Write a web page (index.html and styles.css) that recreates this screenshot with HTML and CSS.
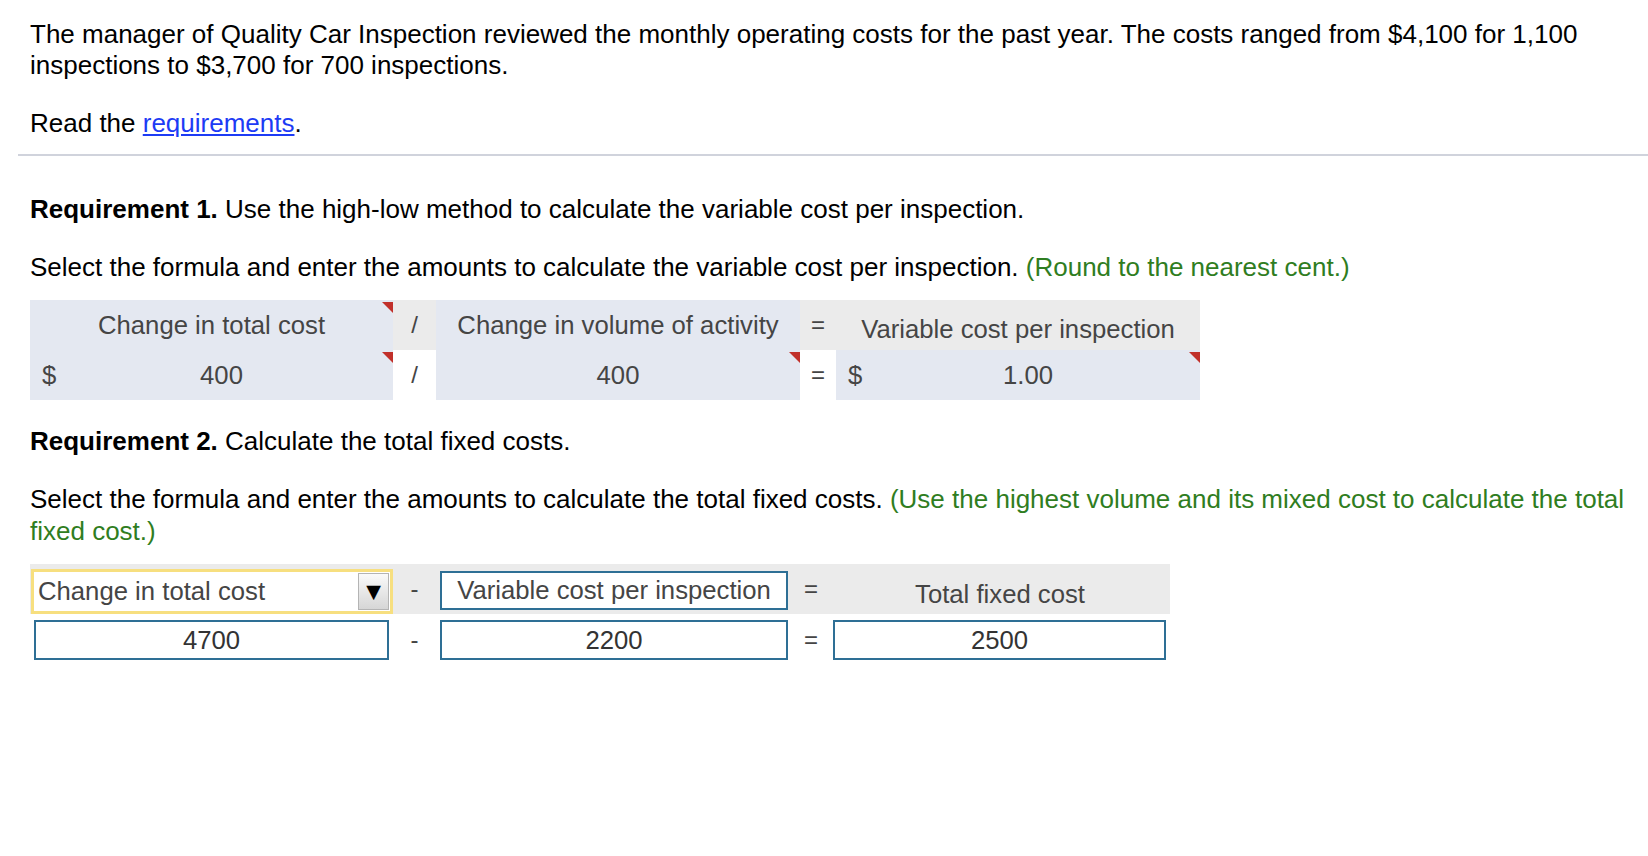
FILE: index.html
```html
<!DOCTYPE html>
<html>
<head>
<meta charset="utf-8">
<title>High-low method</title>
<link rel="stylesheet" href="styles.css">
</head>
<body>
<div class="page">
  <div class="block">
    <p class="intro">The manager of Quality Car Inspection reviewed the monthly operating costs for the past year. The costs ranged from $4,100 for 1,100 inspections to $3,700 for 700 inspections.</p>
    <p class="read">Read the <a href="#" class="link">requirements</a>.</p>
  </div>
  <div class="rule"></div>
  <div class="block">
    <p class="req"><b>Requirement 1.</b> Use the high-low method to calculate the variable cost per inspection.</p>
    <p class="instr">Select the formula and enter the amounts to calculate the variable cost per inspection. <span class="green">(Round to the nearest cent.)</span></p>

    <div class="t1">
      <div class="cell blue center">Change in total cost<span class="tri"></span></div>
      <div class="op gray">/</div>
      <div class="cell blue center">Change in volume of activity</div>
      <div class="op gray">=</div>
      <div class="cell gray center low">Variable cost per inspection</div>

      <div class="cell blue money"><span class="dollar">$</span><span class="val">400</span><span class="tri"></span></div>
      <div class="op">/</div>
      <div class="cell blue center">400<span class="tri"></span></div>
      <div class="op">=</div>
      <div class="cell blue money"><span class="dollar">$</span><span class="val">1.00</span><span class="tri"></span></div>
    </div>

    <p class="req2"><b>Requirement 2.</b> Calculate the total fixed costs.</p>
    <p class="instr2">Select the formula and enter the amounts to calculate the total fixed costs. <span class="green">(Use the highest volume and its mixed cost to calculate the total fixed cost.)</span></p>

    <div class="t2">
      <div class="cell2 gray">
        <div class="select">
          <span class="select-text">Change in total cost</span>
          <span class="select-btn">&#9660;</span>
        </div>
      </div>
      <div class="op gray">-</div>
      <div class="cell2 gray"><div class="box head-box">Variable cost per inspection</div></div>
      <div class="op gray">=</div>
      <div class="cell2 gray center low2">Total fixed cost</div>

      <div class="cell2"><div class="box in-box">4700</div></div>
      <div class="op">-</div>
      <div class="cell2"><div class="box in-box">2200</div></div>
      <div class="op">=</div>
      <div class="cell2"><div class="box in-box">2500</div></div>
    </div>
  </div>
</div>
</body>
</html>
```
FILE: styles.css
```css
html, body {
  margin: 0;
  background: #ffffff;
}

body {
  font-family: "Liberation Sans", Arial, Helvetica, sans-serif;
  color: #000000;
}

.page {
  width: 1648px;
  box-sizing: border-box;
  padding: 19px 0 0 18px;
}

.block {
  padding: 0 8px 0 12px;
}

p {
  margin: 0;
  font-size: 26px;
  line-height: 31px;
}

.read {
  margin-top: 27px;
}

.link {
  color: #1d3bf5;
  text-decoration: underline;
}

.rule {
  height: 2px;
  background: #d0d3dc;
  margin-top: 15px;
}

.req {
  margin-top: 38px;
}

.instr {
  margin-top: 27px;
}

.green {
  color: #2f7d21;
}

.t1 {
  margin-top: 17px;
  display: grid;
  grid-template-columns: 363px 43px 364px 36px 364px;
  grid-template-rows: 50px 50px;
  width: 1170px;
  font-size: 25.7px;
  color: #454545;
}

.cell {
  position: relative;
  display: flex;
  align-items: center;
}

.center {
  justify-content: center;
}

.low {
  padding-top: 8px;
  box-sizing: border-box;
}

.blue {
  background: #e4e8f1;
}

.gray {
  background: #ebebeb;
}

.op {
  display: flex;
  align-items: center;
  justify-content: center;
  font-size: 24px;
  color: #454545;
}

.money .dollar {
  padding-left: 12px;
  width: 18px;
}

.money .val {
  flex: 1;
  text-align: center;
  padding-right: 10px;
}

.tri {
  position: absolute;
  top: 2px;
  right: 0;
  width: 0;
  height: 0;
  border-top: 11px solid #c1302a;
  border-left: 11px solid transparent;
}

.req2 {
  margin-top: 26px;
}

.instr2 {
  margin-top: 27px;
  line-height: 31.5px;
}

.t2 {
  margin-top: 17px;
  display: grid;
  grid-template-columns: 363px 43px 356px 38px 340px;
  grid-template-rows: 50px 52px;
  width: 1140px;
  font-size: 25.7px;
  color: #454545;
}

.cell2 {
  display: flex;
  align-items: center;
}

.low2 {
  padding-top: 10px;
  box-sizing: border-box;
}

.select {
  align-self: flex-end;
  margin-left: 1px;
  height: 45px;
  width: 362px;
  box-sizing: border-box;
  border: 3px solid #f7df7f;
  background: #ffffff;
  display: flex;
  align-items: center;
}

.select-text {
  flex: 1;
  padding-left: 4px;
  color: #454545;
}

.select-btn {
  width: 31px;
  height: 37px;
  box-sizing: border-box;
  margin-right: 1px;
  border: 1px solid #b4b4b4;
  background: linear-gradient(#fafafa, #d6d6d6);
  color: #000000;
  font-size: 25px;
  line-height: 1;
  display: flex;
  align-items: center;
  justify-content: center;
}

.box {
  box-sizing: border-box;
  border: 2px solid #2e6f95;
  background: #ffffff;
  display: flex;
  align-items: center;
  justify-content: center;
  color: #454545;
}

.head-box {
  margin: 3px 4px 0 4px;
  width: 348px;
  height: 39px;
}

.in-box {
  margin: 0 4px;
  width: 100%;
  height: 40px;
  color: #333333;
}

.t2 .cell2:nth-child(10) .in-box {
  margin-left: 3px;
}
```
